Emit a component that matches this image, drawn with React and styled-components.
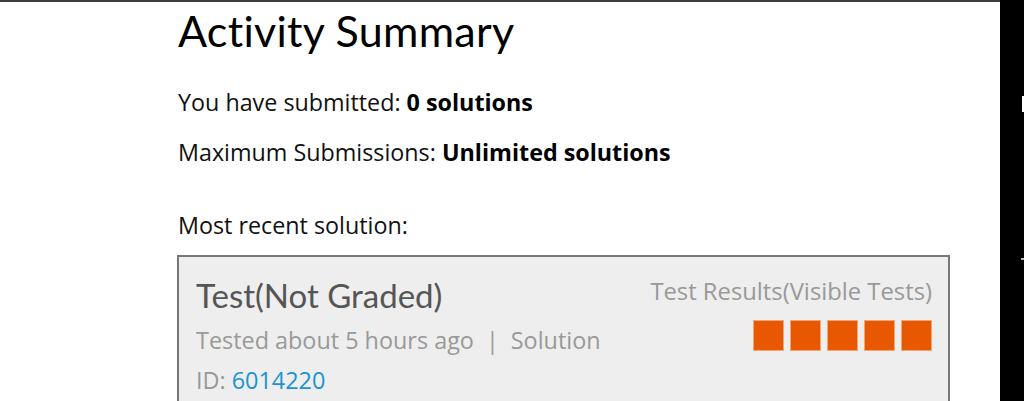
import React from "react";
import styled, { createGlobalStyle } from "styled-components";

const Global = createGlobalStyle`
  html, body { margin: 0; padding: 0; background: #fff; }
  body { width: 1024px; height: 401px; overflow: hidden; }
`;

const Frame = styled.div`
  display: flex;
  width: 1024px;
  height: 401px;
  overflow: hidden;
`;

const Main = styled.main`
  flex: 1;
  border-top: 2px solid #3d3d3d;
  background: #fff;
  padding: 0 0 0 178px;
  box-sizing: border-box;
`;

const SideBar = styled.div`
  width: 24px;
  background: #000;
  position: relative;
`;

const Mark = styled.span`
  position: absolute;
  right: 0;
  width: ${(p) => p.$w}px;
  height: ${(p) => p.$h}px;
  top: ${(p) => p.$top}px;
  background: ${(p) => p.$c};
`;

const Title = styled.h1`
  margin: 3px 0 0;
  font-family: "Lato", "DejaVu Sans", sans-serif;
  font-weight: 400;
  font-size: 43px;
  line-height: 52px;
  color: #000;
  letter-spacing: 0.3px;
`;

const Line = styled.p`
  margin: ${(p) => p.$mt}px 0 0;
  font-family: "Open Sans", "Noto Sans", sans-serif;
  font-size: 23.3px;
  line-height: 28px;
  color: #111;
  b { font-weight: 700; color: #000; }
`;

const Card = styled.section`
  margin: 16px 0 0 -1px;
  width: 773px;
  box-sizing: border-box;
  background: #eeeeee;
  border: 2px solid #777;
  border-bottom: none;
  padding: 18px 16px 0 17px;
  display: flex;
  justify-content: space-between;
  height: 160px;
`;

const Left = styled.div`
  display: flex;
  flex-direction: column;
`;

const CardTitle = styled.div`
  font-family: "Lato", "DejaVu Sans", sans-serif;
  font-size: 33px;
  line-height: 40px;
  color: #555;
`;

const Meta = styled.div`
  margin-top: ${(p) => p.$mt}px;
  font-family: "Open Sans", "Noto Sans", sans-serif;
  font-size: 23.4px;
  line-height: 30px;
  color: #999;
  a { color: #1c93d1; text-decoration: none; }
`;

const Sep = styled.span`
  margin: 0 12px;
`;

const Right = styled.div`
  display: flex;
  flex-direction: column;
  align-items: flex-end;
`;

const ResultsLabel = styled.div`
  margin-top: 1px;
  font-family: "Open Sans", "Noto Sans", sans-serif;
  font-size: 23.8px;
  line-height: 30px;
  color: #999;
`;

const Squares = styled.div`
  display: flex;
  gap: 6px;
  margin-top: 14px;
`;

const Square = styled.span`
  width: 31px;
  height: 31px;
  box-sizing: border-box;
  background: #e85800;
  border: 1px solid #f3a57a;
`;

export default function App() {
  return (
    <>
      <Global />
      <Frame>
        <Main>
          <Title>Activity Summary</Title>
          <Line $mt={31}>
            You have submitted: <b>0 solutions</b>
          </Line>
          <Line $mt={22}>
            Maximum Submissions: <b>Unlimited solutions</b>
          </Line>
          <Line $mt={45}>Most recent solution:</Line>
          <Card>
            <Left>
              <CardTitle>Test(Not Graded)</CardTitle>
              <Meta $mt={10}>
                Tested about 5 hours ago<Sep>|</Sep>Solution
              </Meta>
              <Meta $mt={10}>
                ID: <a href="#">6014220</a>
              </Meta>
            </Left>
            <Right>
              <ResultsLabel>Test Results(Visible Tests)</ResultsLabel>
              <Squares>
                {[0, 1, 2, 3, 4].map((i) => (
                  <Square key={i} />
                ))}
              </Squares>
            </Right>
          </Card>
        </Main>
        <SideBar>
          <Mark $top={96} $w={2} $h={16} $c="#fff" />
          <Mark $top={258} $w={3} $h={2} $c="#bbb" />
        </SideBar>
      </Frame>
    </>
  );
}
